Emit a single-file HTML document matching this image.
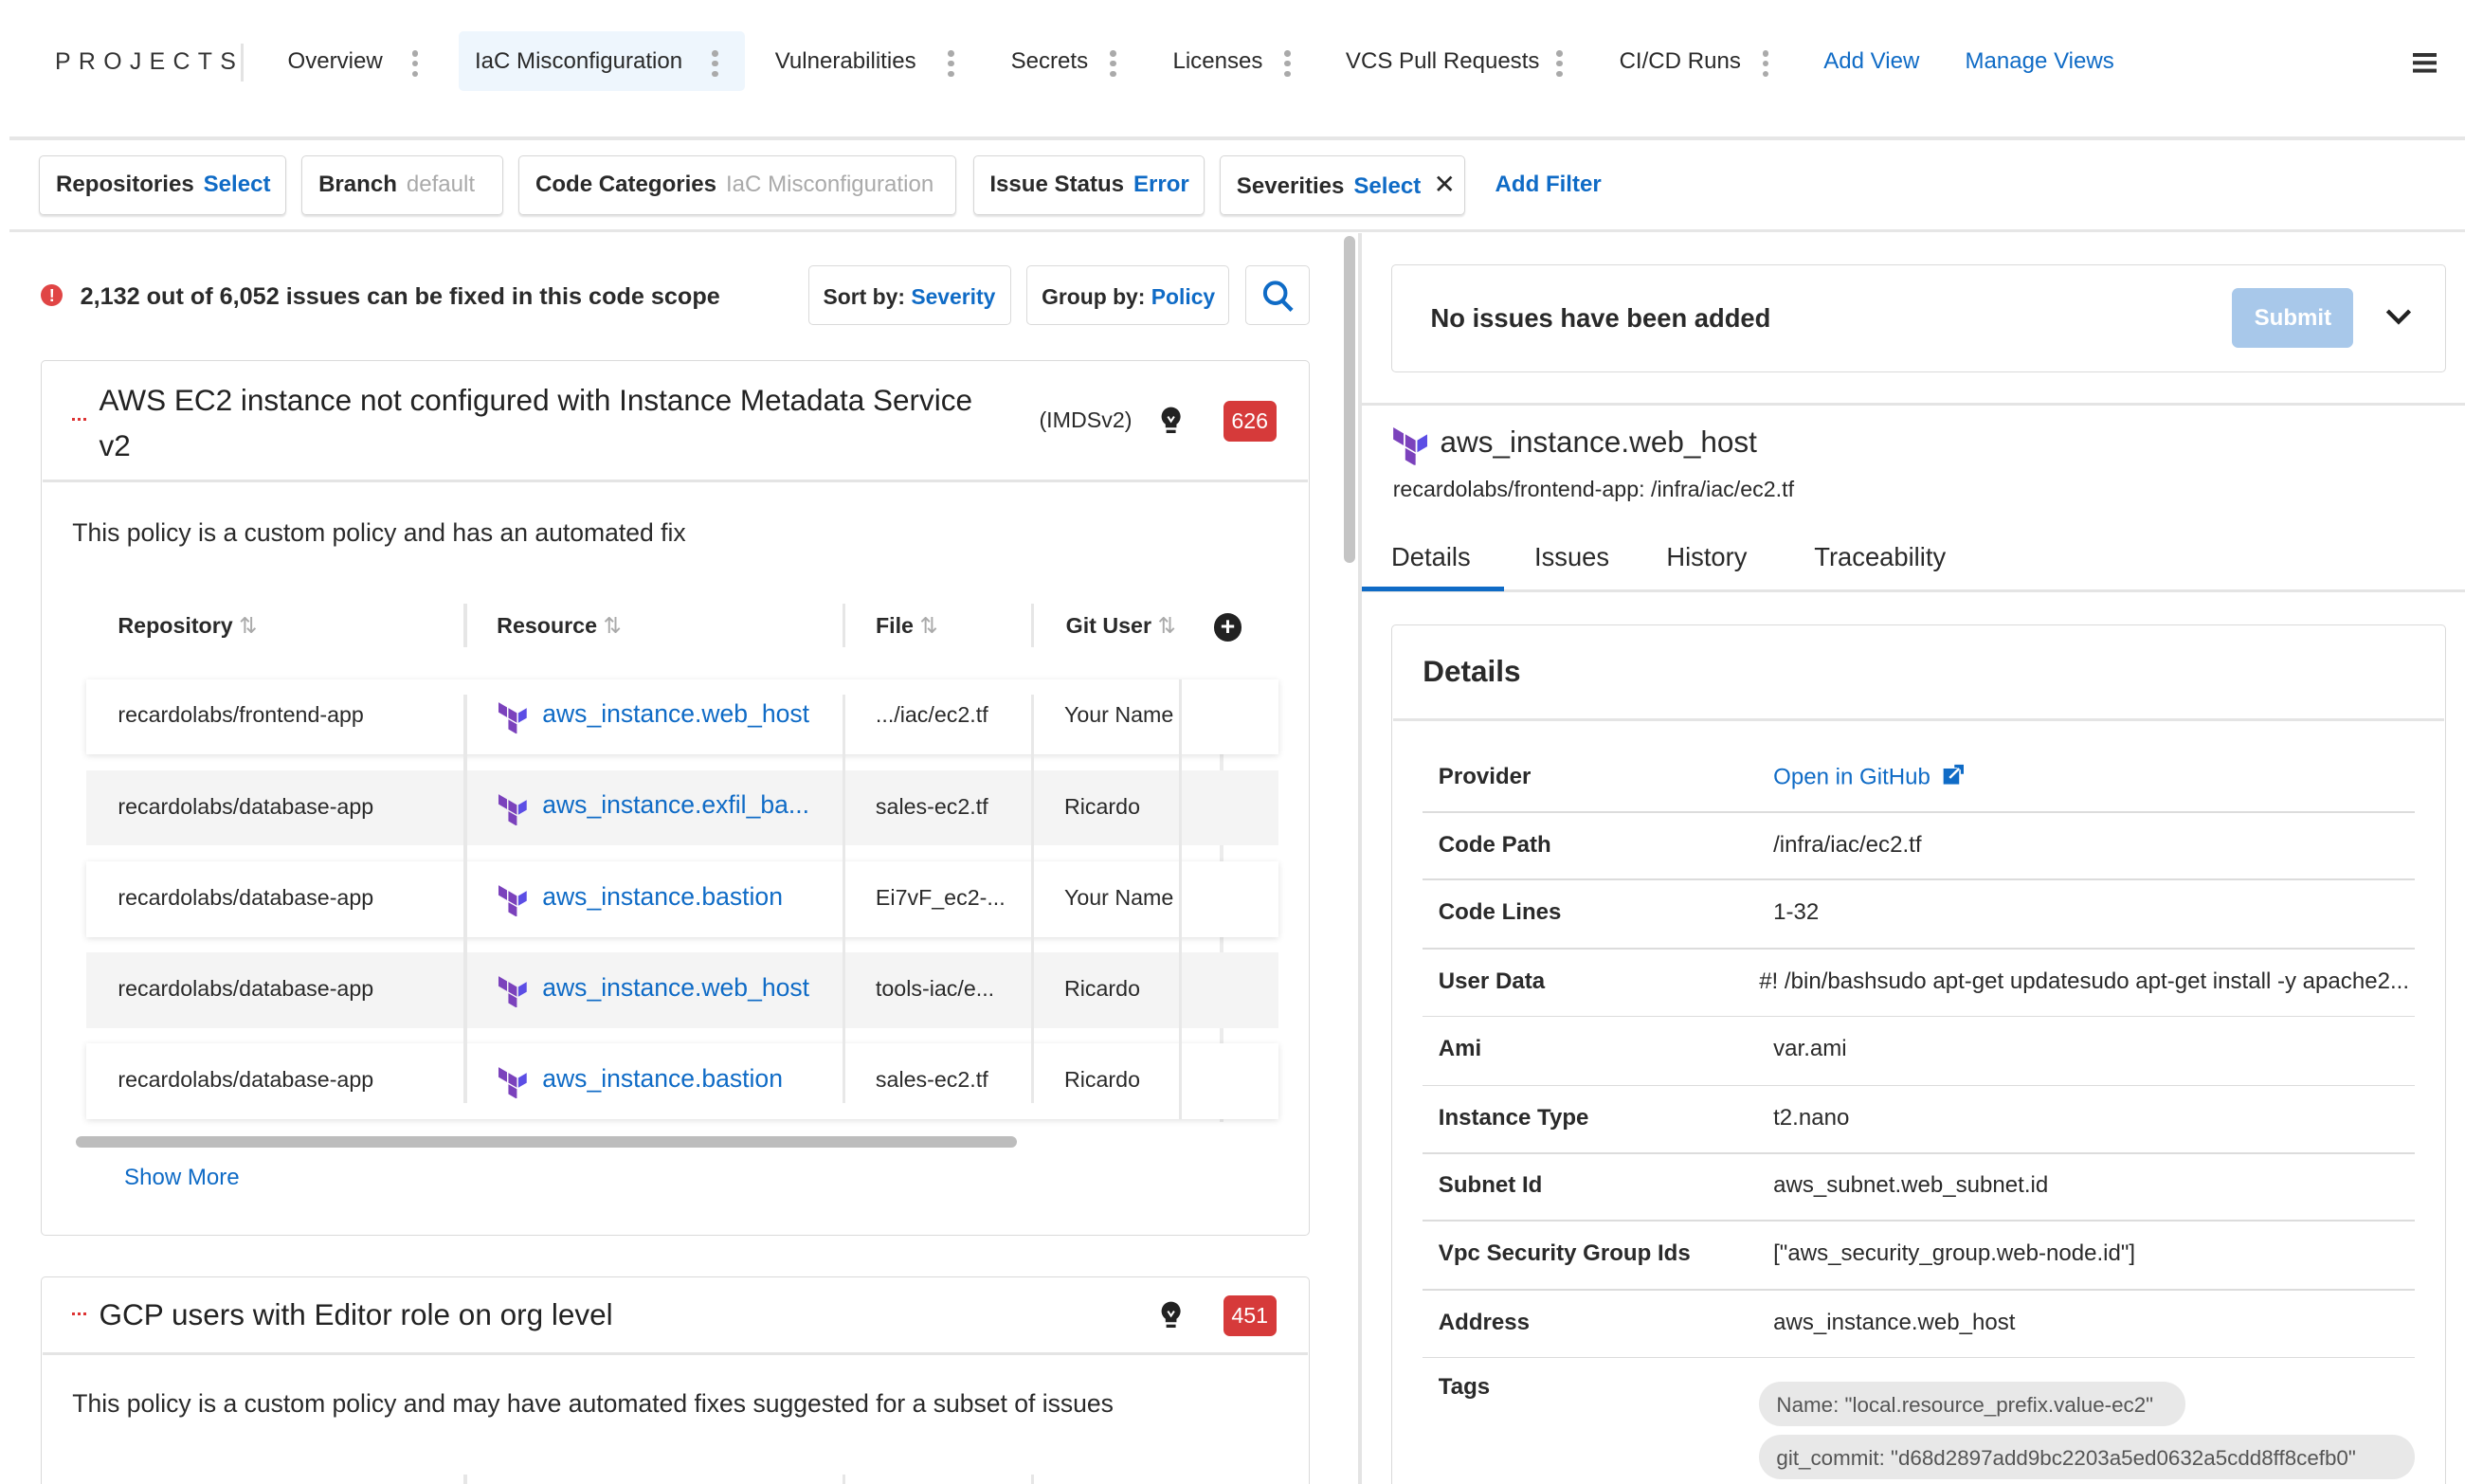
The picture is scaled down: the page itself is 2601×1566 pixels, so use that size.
<!DOCTYPE html>
<html><head><meta charset="utf-8"><style>
*{box-sizing:border-box;margin:0;padding:0}
html,body{width:2601px;height:1566px;overflow:hidden;background:#fff}
#w{zoom:1.6588;width:1568px;height:944px;position:relative;font-family:"Liberation Sans",sans-serif;color:#2a2a2a;overflow:hidden}
.a{position:absolute;white-space:nowrap}
.b{color:#0f6bc6}
.g{color:#aaa}
.k{position:absolute;width:4px;height:17px}
.k i{display:block;width:4px;height:4px;border-radius:2px;background:#aaa;margin-bottom:2.5px}
.fb{position:absolute;top:99px;height:38px;border:1px solid #d6d6d6;border-radius:3px;font-size:14.5px;line-height:36px;padding:0 10px;font-weight:bold;white-space:nowrap;box-shadow:0 1px 1px #e4e4e4}
.fb span{font-weight:bold;margin-left:6px}
.box{position:absolute;border:1px solid #dadada;border-radius:3px}
.row{position:absolute;left:55px;width:758px;height:48px;font-size:14px}
.row.w{background:#fff;box-shadow:0 1px 4px rgba(0,0,0,.12)}
.row.s{background:#f4f4f4}
.row div{position:absolute;top:15px;white-space:nowrap}
.vd{position:absolute;width:2px;background:#e6e6e6}
.dl{position:absolute;left:915px;font-size:14.5px;font-weight:bold}
.dv{position:absolute;left:1128px;font-size:14.5px;white-space:nowrap}
.hl{position:absolute;left:905px;width:631px;height:1px;background:#dcdcdc}
</style></head><body><div id="w">
<!-- nav -->
<div class="a" style="left:35px;top:31px;font-size:15px;letter-spacing:5px;color:#333">PROJECTS</div>
<div class="a" style="left:153px;top:28px;width:2px;height:24px;background:#e3e3e3"></div>
<div class="a" style="left:292px;top:20px;width:182px;height:38px;background:#eef6fd;border-radius:3px"></div>
<div class="a" style="left:183px;top:31px;font-size:14.5px">Overview</div><div class="k" style="left:262px;top:32px"><i></i><i></i><i></i></div>
<div class="a" style="left:302px;top:31px;font-size:14.5px">IaC Misconfiguration</div><div class="k" style="left:453px;top:32px"><i></i><i></i><i></i></div>
<div class="a" style="left:493px;top:31px;font-size:14.5px">Vulnerabilities</div><div class="k" style="left:603px;top:32px"><i></i><i></i><i></i></div>
<div class="a" style="left:643px;top:31px;font-size:14.5px">Secrets</div><div class="k" style="left:706px;top:32px"><i></i><i></i><i></i></div>
<div class="a" style="left:746px;top:31px;font-size:14.5px">Licenses</div><div class="k" style="left:817px;top:32px"><i></i><i></i><i></i></div>
<div class="a" style="left:856px;top:31px;font-size:14.5px">VCS Pull Requests</div><div class="k" style="left:990px;top:32px"><i></i><i></i><i></i></div>
<div class="a" style="left:1030px;top:31px;font-size:14.5px">CI/CD Runs</div><div class="k" style="left:1121px;top:32px"><i></i><i></i><i></i></div>
<div class="a b" style="left:1160px;top:31px;font-size:14.5px">Add View</div>
<div class="a b" style="left:1250px;top:31px;font-size:14.5px">Manage Views</div>
<div class="a" style="left:1535px;top:34px;width:15px;height:2px;background:#333;box-shadow:0 5px 0 #333,0 10px 0 #333"></div>
<div class="a" style="left:6px;top:87px;width:1562px;height:2px;background:#e6e6e6"></div>
<!-- filters -->
<div class="fb" style="left:25px;width:157px">Repositories<span class="b">Select</span></div>
<div class="fb" style="left:192px;width:128px">Branch<span class="g" style="font-weight:normal">default</span></div>
<div class="fb" style="left:330px;width:278px">Code Categories<span class="g" style="font-weight:normal">IaC Misconfiguration</span></div>
<div class="fb" style="left:619px;width:147px">Issue Status<span class="b">Error</span></div>
<div class="fb" style="left:776px;width:156px">Severities<span class="b">Select</span><span style="font-weight:normal;font-size:17px;margin-left:8px">✕</span></div>
<div class="a b" style="left:951px;top:109px;font-size:14.5px;font-weight:bold">Add Filter</div>
<div class="a" style="left:6px;top:146px;width:1562px;height:2px;background:#e6e6e6"></div>
<!-- left pane -->
<div class="a" style="left:855px;top:150px;width:7px;height:208px;background:#c4c4c4;border-radius:4px"></div>
<div class="a" style="left:864px;top:148px;width:2px;height:796px;background:#e4e4e4"></div>
<div class="a" style="left:26px;top:181px;width:14px;height:14px;border-radius:7px;background:#e04545;color:#fff;font-size:11px;font-weight:bold;text-align:center;line-height:14px">!</div>
<div class="a" style="left:51px;top:180px;font-size:15.2px;font-weight:bold">2,132 out of 6,052 issues can be fixed in this code scope</div>
<div class="box" style="left:514px;top:169px;width:129px;height:38px;font-size:13.8px;font-weight:bold;padding:11px 0 0 9px;white-space:nowrap">Sort by: <span class="b">Severity</span></div>
<div class="box" style="left:653px;top:169px;width:129px;height:38px;font-size:13.8px;font-weight:bold;padding:11px 0 0 9px;white-space:nowrap">Group by: <span class="b">Policy</span></div>
<div class="box" style="left:792px;top:169px;width:41px;height:38px"><svg width="41" height="38" viewBox="0 0 41 38"><circle cx="18.5" cy="17" r="6.5" fill="none" stroke="#0f6bc6" stroke-width="2.4"/><path d="M23 22l6 6" stroke="#0f6bc6" stroke-width="2.6"/></svg></div>
<!-- card 1 -->
<div class="box" style="left:26px;top:229px;width:807px;height:557px"></div>
<div class="a" style="left:27px;top:305px;width:805px;height:2px;background:#e4e4e4"></div>
<div class="a" style="left:46px;top:266px;width:9px;height:2px;border-top:2px dotted #d33"></div>
<div class="a" style="left:63px;top:240px;font-size:19px;line-height:29px;white-space:normal;width:580px;color:#222">AWS EC2 instance not configured with Instance Metadata Service v2</div>
<div class="a" style="left:661px;top:259px;font-size:14px">(IMDSv2)</div>
<svg class="a" style="left:738px;top:258px" width="14" height="20" viewBox="0 0 14 20"><path d="M7 1a6 6 0 0 0-3.5 10.9V14h7v-2.1A6 6 0 0 0 7 1z" fill="#222"/><rect x="4" y="15.5" width="6" height="2" fill="#222"/><path d="M5 7l2 3 2-3" stroke="#fff" stroke-width="1.2" fill="none"/></svg>
<div class="a" style="left:778px;top:255px;width:34px;height:26px;background:#d63a3a;border-radius:4px;color:#fff;font-size:14px;text-align:center;line-height:26px">626</div>
<div class="a" style="left:46px;top:330px;font-size:16px">This policy is a custom policy and has an automated fix</div>
<!-- table header -->
<div class="a" style="left:75px;top:390px;font-size:14px;font-weight:bold">Repository <span style="color:#aaa;font-weight:normal">⇅</span></div>
<div class="a" style="left:316px;top:390px;font-size:14px;font-weight:bold">Resource <span style="color:#aaa;font-weight:normal">⇅</span></div>
<div class="a" style="left:557px;top:390px;font-size:14px;font-weight:bold">File <span style="color:#aaa;font-weight:normal">⇅</span></div>
<div class="a" style="left:678px;top:390px;font-size:14px;font-weight:bold">Git User <span style="color:#aaa;font-weight:normal">⇅</span></div>
<div class="vd" style="left:295px;top:384px;height:28px"></div><div class="vd" style="left:536px;top:384px;height:28px"></div><div class="vd" style="left:656px;top:384px;height:28px"></div>
<div class="vd" style="left:776px;top:432px;height:282px;background:#ececec"></div>
<div class="a" style="left:772px;top:390px;width:18px;height:18px;border-radius:9px;background:#222;color:#fff;font-size:16px;line-height:17px;text-align:center;font-weight:bold">+</div>
<svg width="0" height="0" style="position:absolute"><defs><symbol id="tf" viewBox="0 0 20 22"><path d="M7 4l6 3.5v7L7 11z" fill="#7b42bc"/><path d="M14 7.5l6-3.5v7l-6 3.5z" fill="#5c4ee5"/><path d="M0 0l6 3.5v7L0 7z" fill="#7b42bc"/><path d="M7 12l6 3.5v7L7 19z" fill="#7b42bc"/></symbol></defs></svg>
<div class="row w" style="top:432px"><div style="left:20px">recardolabs/frontend-app</div><svg class="a" style="left:262px;top:15px" width="18" height="20"><use href="#tf"/></svg><div class="b" style="left:290px;top:13px;font-size:16px">aws_instance.web_host</div><div style="left:502px">.../iac/ec2.tf</div><div style="left:622px">Your Name</div></div>
<div class="row s" style="top:490px"><div style="left:20px">recardolabs/database-app</div><svg class="a" style="left:262px;top:15px" width="18" height="20"><use href="#tf"/></svg><div class="b" style="left:290px;top:13px;font-size:16px">aws_instance.exfil_ba...</div><div style="left:502px">sales-ec2.tf</div><div style="left:622px">Ricardo</div></div>
<div class="row w" style="top:548px"><div style="left:20px">recardolabs/database-app</div><svg class="a" style="left:262px;top:15px" width="18" height="20"><use href="#tf"/></svg><div class="b" style="left:290px;top:13px;font-size:16px">aws_instance.bastion</div><div style="left:502px">Ei7vF_ec2-...</div><div style="left:622px">Your Name</div></div>
<div class="row s" style="top:606px"><div style="left:20px">recardolabs/database-app</div><svg class="a" style="left:262px;top:15px" width="18" height="20"><use href="#tf"/></svg><div class="b" style="left:290px;top:13px;font-size:16px">aws_instance.web_host</div><div style="left:502px">tools-iac/e...</div><div style="left:622px">Ricardo</div></div>
<div class="row w" style="top:664px"><div style="left:20px">recardolabs/database-app</div><svg class="a" style="left:262px;top:15px" width="18" height="20"><use href="#tf"/></svg><div class="b" style="left:290px;top:13px;font-size:16px">aws_instance.bastion</div><div style="left:502px">sales-ec2.tf</div><div style="left:622px">Ricardo</div></div>
<div class="vd" style="left:295px;top:442px;height:260px;background:#e8e8e8"></div><div class="vd" style="left:536px;top:442px;height:260px;background:#e8e8e8"></div><div class="vd" style="left:656px;top:442px;height:260px;background:#e8e8e8"></div><div class="vd" style="left:750px;top:432px;height:280px;background:#e8e8e8"></div>
<div class="a" style="left:48px;top:723px;width:599px;height:7px;background:#bdbdbd;border-radius:4px"></div>
<div class="a b" style="left:79px;top:741px;font-size:14.5px">Show More</div>
<!-- card 2 -->
<div class="box" style="left:26px;top:812px;width:807px;height:150px"></div>
<div class="a" style="left:27px;top:860px;width:805px;height:2px;background:#e4e4e4"></div>
<div class="a" style="left:46px;top:835px;width:9px;height:2px;border-top:2px dotted #d33"></div>
<div class="a" style="left:63px;top:825px;font-size:19px;color:#222">GCP users with Editor role on org level</div>
<svg class="a" style="left:738px;top:827px" width="14" height="20" viewBox="0 0 14 20"><path d="M7 1a6 6 0 0 0-3.5 10.9V14h7v-2.1A6 6 0 0 0 7 1z" fill="#222"/><rect x="4" y="15.5" width="6" height="2" fill="#222"/><path d="M5 7l2 3 2-3" stroke="#fff" stroke-width="1.2" fill="none"/></svg>
<div class="a" style="left:778px;top:824px;width:34px;height:26px;background:#d63a3a;border-radius:4px;color:#fff;font-size:14px;text-align:center;line-height:26px">451</div>
<div class="a" style="left:46px;top:884px;font-size:16px">This policy is a custom policy and may have automated fixes suggested for a subset of issues</div>
<div class="vd" style="left:295px;top:938px;height:8px"></div><div class="vd" style="left:536px;top:938px;height:8px"></div><div class="vd" style="left:656px;top:938px;height:8px"></div>
<!-- right -->
<div class="box" style="left:885px;top:168px;width:671px;height:69px"></div>
<div class="a" style="left:910px;top:193px;font-size:16.5px;font-weight:bold">No issues have been added</div>
<div class="a" style="left:1420px;top:183px;width:77px;height:38px;background:#a8c8ea;border-radius:4px;color:#fff;font-weight:bold;font-size:14.5px;text-align:center;line-height:38px">Submit</div>
<svg class="a" style="left:1517px;top:195px" width="18" height="14"><path d="M2 3l7 7 7-7" stroke="#222" stroke-width="2.6" fill="none"/></svg>
<div class="a" style="left:866px;top:256px;width:702px;height:2px;background:#e4e4e4"></div>
<svg class="a" style="left:886px;top:272px" width="22" height="24"><use href="#tf"/></svg>
<div class="a" style="left:916px;top:270px;font-size:19px">aws_instance.web_host</div>
<div class="a" style="left:886px;top:303px;font-size:14px">recardolabs/frontend-app: /infra/iac/ec2.tf</div>
<div class="a" style="left:885px;top:345px;font-size:16.5px">Details</div>
<div class="a" style="left:976px;top:345px;font-size:16.5px">Issues</div>
<div class="a" style="left:1060px;top:345px;font-size:16.5px">History</div>
<div class="a" style="left:1154px;top:345px;font-size:16.5px">Traceability</div>
<div class="a" style="left:866px;top:375px;width:702px;height:2px;background:#e4e4e4"></div>
<div class="a" style="left:866px;top:373px;width:91px;height:3px;background:#0f6bc6"></div>
<div class="box" style="left:885px;top:397px;width:671px;height:580px"></div>
<div class="a" style="left:905px;top:416px;font-size:19px;font-weight:bold">Details</div>
<div class="a" style="left:886px;top:457px;width:669px;height:2px;background:#e4e4e4"></div>
<div class="dl" style="top:486px">Provider</div><div class="dv b" style="top:486px">Open in GitHub <svg width="14" height="14" style="vertical-align:-1px;margin-left:3px"><rect x="1" y="3" width="10" height="10" fill="#0f6bc6"/><path d="M5 9l7-7M8 1.5h5v5" stroke="#0f6bc6" stroke-width="2" fill="none"/><path d="M5 9l6-6" stroke="#fff" stroke-width="1.5"/></svg></div>
<div class="hl" style="top:516px"></div>
<div class="dl" style="top:529px">Code Path</div><div class="dv" style="top:529px">/infra/iac/ec2.tf</div>
<div class="hl" style="top:559px"></div>
<div class="dl" style="top:572px">Code Lines</div><div class="dv" style="top:572px">1-32</div>
<div class="hl" style="top:603px"></div>
<div class="dl" style="top:616px">User Data</div><div class="dv" style="top:616px;left:1119px">#! /bin/bashsudo apt-get updatesudo apt-get install -y apache2...</div>
<div class="hl" style="top:646px"></div>
<div class="dl" style="top:659px">Ami</div><div class="dv" style="top:659px">var.ami</div>
<div class="hl" style="top:690px"></div>
<div class="dl" style="top:703px">Instance Type</div><div class="dv" style="top:703px">t2.nano</div>
<div class="hl" style="top:733px"></div>
<div class="dl" style="top:746px">Subnet Id</div><div class="dv" style="top:746px">aws_subnet.web_subnet.id</div>
<div class="hl" style="top:776px"></div>
<div class="dl" style="top:789px">Vpc Security Group Ids</div><div class="dv" style="top:789px">["aws_security_group.web-node.id"]</div>
<div class="hl" style="top:820px"></div>
<div class="dl" style="top:833px">Address</div><div class="dv" style="top:833px">aws_instance.web_host</div>
<div class="hl" style="top:863px"></div>
<div class="dl" style="top:874px">Tags</div>
<div class="a" style="left:1119px;top:879px;width:271px;height:28px;background:#e8e8e8;border-radius:14px;font-size:13.5px;color:#555;padding:7px 0 0 11px">Name: "local.resource_prefix.value-ec2"</div>
<div class="a" style="left:1119px;top:913px;width:417px;height:28px;background:#e8e8e8;border-radius:14px;font-size:13.5px;color:#555;padding:7px 0 0 11px;overflow:hidden">git_commit: "d68d2897add9bc2203a5ed0632a5cdd8ff8cefb0"</div>
</div></body></html>
